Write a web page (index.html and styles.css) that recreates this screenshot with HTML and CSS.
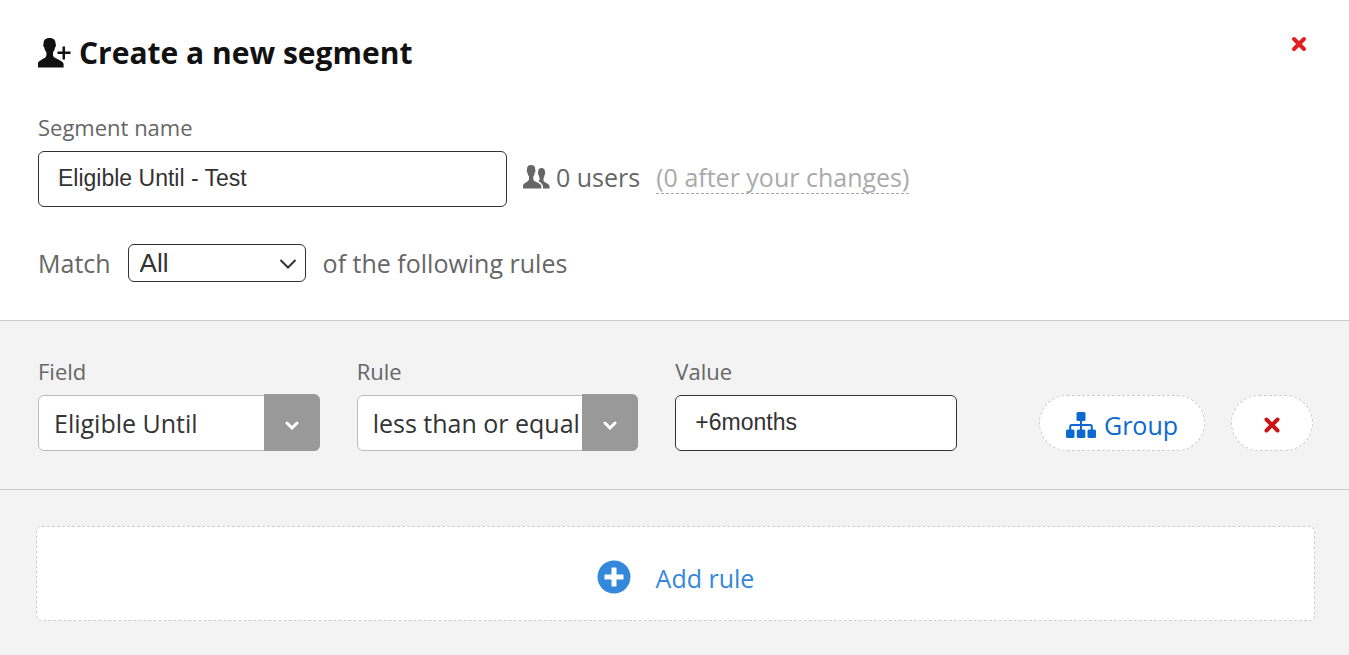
FILE: index.html
```html
<!DOCTYPE html>
<html lang="en">
<head>
<meta charset="utf-8">
<meta name="viewport" content="width=device-width, initial-scale=1">
<title>Create a new segment</title>
<link rel="stylesheet" href="styles.css">
</head>
<body>
<form class="segment">
  <section class="intro">
    <header class="title-row">
      <h1 class="title">
        <svg class="icon-user-add" viewBox="0 0 33 30" aria-hidden="true"><path d="M11.500 0C15.800 0 17.800 2.200 17.600 6C18.300 6.600 18 9 17 9.600C16.700 12 15.900 13.300 15 14.300V17.500C15.800 20.800 25 22 25.600 26V29.500H0V25C.8 22 7.700 20.800 8.400 17.500V14.300C7.400 13.200 6.600 12 6.300 9.600C5.100 9 4.900 6.600 5.600 6C5.300 2.200 7.200 0 11.500 0Z"/><path d="M24.500 8.500H27V13.500H32.500V16H27V21.500H24.500V16H19.500V13.500H24.500Z"/></svg>
        Create a new segment
      </h1>
      <button class="close" type="button" aria-label="Close"><svg class="icon-x" viewBox="0 0 16 16" aria-hidden="true"><path d="M3 3L13 13M13 3L3 13"/></svg></button>
    </header>
    <label class="label" for="name">Segment name</label>
    <div class="name-row">
      <input class="text-input name-input" id="name" type="text" value="Eligible Until - Test">
      <p class="users">
        <svg class="icon-users" viewBox="0 0 27 24" aria-hidden="true"><path d="M8 0C11 0 12.400 1.800 12.200 4.800C12.800 5.500 12.400 7.300 11.700 7.800C11.500 9.700 11 10.700 10.300 11.500V14.500C10.800 17 18 18 18.300 21V23.500H0V20.500C.5 17.700 5.500 17 6 14.500V11.500C5.300 10.700 4.800 9.700 4.500 7.800C3.700 7.300 3.500 5.500 4 4.800C3.800 1.800 5.200 0 8 0Z"/><path d="M18.500 3C21 3 22.200 4.700 22 7.200C22.500 7.700 22.200 9.200 21.600 9.700C21.400 11.300 21 12.200 20.500 12.900V15.500C21 17.600 26 18.400 26.500 21V23.500H20V21C19.600 18.500 17 17.300 15.500 16.200C16.200 15.600 16.700 14.500 16.700 12.900C16.200 12.200 15.800 11.300 15.600 9.700C15 9.200 14.700 7.700 15.200 7.200C15 4.700 16 3 18.500 3Z"/></svg>
        <span>0 users</span>
      </p>
      <span class="preview">(0 after your changes)</span>
    </div>
    <div class="match-row">
      <label for="match">Match</label>
      <span class="match-control">
        <select class="match-select" id="match"><option>All</option><option>Any</option></select>
        <svg class="match-chevron" viewBox="0 0 18 10" aria-hidden="true"><path d="M1.500 1L9 8.500L16.500 1"/></svg>
      </span>
      <span>of the following rules</span>
    </div>
  </section>

  <section class="rule">
    <div class="fields">
      <div class="field">
        <label class="label" for="field">Field</label>
        <span class="dropdown">
          <select class="dropdown-select" id="field"><option>Eligible Until</option></select>
          <span class="dropdown-arrow"><svg class="arrow" viewBox="0 0 14 9" aria-hidden="true"><path d="M2 2L7 7L12 2"/></svg></span>
        </span>
      </div>
      <div class="field">
        <label class="label" for="rule">Rule</label>
        <span class="dropdown">
          <select class="dropdown-select" id="rule"><option>less than or equal</option></select>
          <span class="dropdown-arrow"><svg class="arrow" viewBox="0 0 14 9" aria-hidden="true"><path d="M2 2L7 7L12 2"/></svg></span>
        </span>
      </div>
      <div class="field">
        <label class="label" for="value">Value</label>
        <input class="text-input" id="value" type="text" value="+6months">
      </div>
    </div>
    <div class="actions">
      <button class="pill group" type="button">
        <svg class="icon-group" viewBox="0 0 30 26" aria-hidden="true"><rect x="10.500" width="9" height="9" rx="1.500"/><rect y="17.500" width="8.500" height="8.500" rx="1.500"/><rect x="10.800" y="17.500" width="8.500" height="8.500" rx="1.500"/><rect x="21.500" y="17.500" width="8.500" height="8.500" rx="1.500"/><path d="M15 8V18M4.200 18V14.500Q4.200 13 5.700 13H24.300Q25.800 13 25.800 14.500V18"/></svg>
        Group
      </button>
      <button class="pill remove" type="button" aria-label="Remove rule"><svg class="icon-x" viewBox="0 0 16 16" aria-hidden="true"><path d="M2.500 2.500L13.500 13.500M13.500 2.500L2.500 13.500"/></svg></button>
    </div>
  </section>

  <section class="add">
    <button class="add-rule" type="button">
      <svg class="icon-plus" viewBox="0 0 34 34" aria-hidden="true"><circle cx="17" cy="17" r="16.500"/><path d="M15 7.500H19Q19.500 7.500 19.500 8V14.500H26Q26.500 14.500 26.500 15V19Q26.500 19.500 26 19.500H19.500V26Q19.500 26.500 19 26.500H15Q14.500 26.500 14.500 26V19.500H8Q7.500 19.500 7.500 19V15Q7.500 14.500 8 14.500H14.500V8Q14.500 7.500 15 7.500Z"/></svg>
      Add rule
    </button>
  </section>
</form>
</body>
</html>
```
FILE: styles.css
```css
* {
  box-sizing: border-box;
}

body {
  margin: 0;
  background: #f3f3f3;
  color: #666;
  font-family: "Segoe UI", "Open Sans", "Noto Sans", sans-serif;
  font-size: 25px;
  line-height: 36px;
}

button,
select {
  font: inherit;
  cursor: pointer;
}

.intro {
  padding: 31px 38px 38px;
  background: #fff;
  border-bottom: 1px solid #ccc;
}

.title-row {
  display: flex;
  justify-content: space-between;
  align-items: flex-start;
}

.title {
  display: flex;
  align-items: center;
  gap: 8px;
  margin: 0;
  color: #111;
  font-size: 30px;
  line-height: 44px;
}

.icon-user-add {
  width: 33px;
  height: 30px;
  fill: currentColor;
}

.close {
  display: flex;
  padding: 5px 4px;
  border: 0;
  background: none;
  color: #e02020;
}

.icon-x {
  width: 16px;
  height: 16px;
  fill: none;
  stroke: currentColor;
  stroke-width: 4;
  stroke-linecap: round;
}

.label {
  display: block;
  font-size: 22px;
  line-height: 32px;
}

.intro > .label {
  margin: 36px 0 8px;
}

.name-row {
  display: flex;
  align-items: center;
  gap: 16px;
}

.text-input {
  width: 100%;
  height: 56px;
  padding: 0 19px 2px;
  border: 1px solid #333;
  border-radius: 6px;
  background: #fff;
  color: #333;
  font-family: "Liberation Sans", Arial, sans-serif;
  font-size: 23px;
}

.name-input {
  width: 469px;
}

.users {
  display: flex;
  align-items: center;
  gap: 6px;
  margin: 0;
  padding-bottom: 4px;
}

.icon-users {
  width: 27px;
  height: 24px;
  fill: currentColor;
}

.preview {
  margin-bottom: 4px;
  border-bottom: 1px dashed #aaa;
  color: #aaa;
  line-height: 32px;
}

.match-row {
  display: flex;
  align-items: center;
  gap: 17px;
  margin-top: 37px;
}

.match-control {
  display: flex;
  position: relative;
}

.match-select {
  width: 178px;
  height: 38px;
  padding: 0 11px;
  appearance: none;
  border: 1px solid #333;
  border-radius: 6px;
  background: #fff;
  color: #333;
  font-family: "Liberation Sans", Arial, sans-serif;
  font-size: 26px;
  line-height: 36px;
}

.match-chevron {
  position: absolute;
  top: 15px;
  right: 9px;
  width: 18px;
  height: 10px;
  fill: none;
  stroke: #333;
  stroke-width: 2;
  pointer-events: none;
}

.rule {
  display: flex;
  align-items: flex-end;
  gap: 82px;
  padding: 34px 36px 38px 38px;
  border-bottom: 1px solid #ccc;
}

.fields {
  display: grid;
  flex: 1;
  grid-template-columns: repeat(3, minmax(0, 1fr));
  gap: 37px;
}

.field .label {
  margin-bottom: 8px;
}

.dropdown {
  display: flex;
  position: relative;
}

.dropdown-select {
  width: 100%;
  height: 56px;
  padding: 0 56px 0 15px;
  appearance: none;
  border: 1px solid #bbb;
  border-radius: 6px;
  background: #fff;
  color: #333;
}

.dropdown-arrow {
  display: flex;
  position: absolute;
  inset: -1px 0 0 auto;
  align-items: center;
  justify-content: center;
  width: 56px;
  padding-top: 5px;
  border-radius: 0 6px 6px 0;
  background: #999;
  pointer-events: none;
}

.arrow {
  width: 14px;
  height: 9px;
  fill: none;
  stroke: #fff;
  stroke-width: 3;
  stroke-linecap: round;
}

.actions {
  display: flex;
  gap: 26px;
}

.pill {
  display: flex;
  align-items: center;
  justify-content: center;
  height: 56px;
  padding: 4px 24px 0;
  border: 1px dashed #ccc;
  border-radius: 28px;
  background: #fff;
}

.group {
  gap: 8px;
  min-width: 166px;
  color: #0b69cf;
}

.icon-group {
  width: 30px;
  height: 26px;
  fill: currentColor;
}

.icon-group path {
  fill: none;
  stroke: currentColor;
  stroke-width: 2;
}

.remove {
  width: 82px;
  color: #c81414;
}

.add {
  padding: 36px 34px 34px 36px;
}

.add-rule {
  display: flex;
  align-items: center;
  justify-content: center;
  gap: 25px;
  width: 100%;
  height: 95px;
  padding: 8px 0 0;
  border: 1px dashed #ccc;
  border-radius: 6px;
  background: #fff;
  color: #3388dc;
}

.icon-plus {
  width: 34px;
  height: 34px;
  margin-bottom: 2px;
  fill: currentColor;
}

.icon-plus path {
  fill: #fff;
}
```
